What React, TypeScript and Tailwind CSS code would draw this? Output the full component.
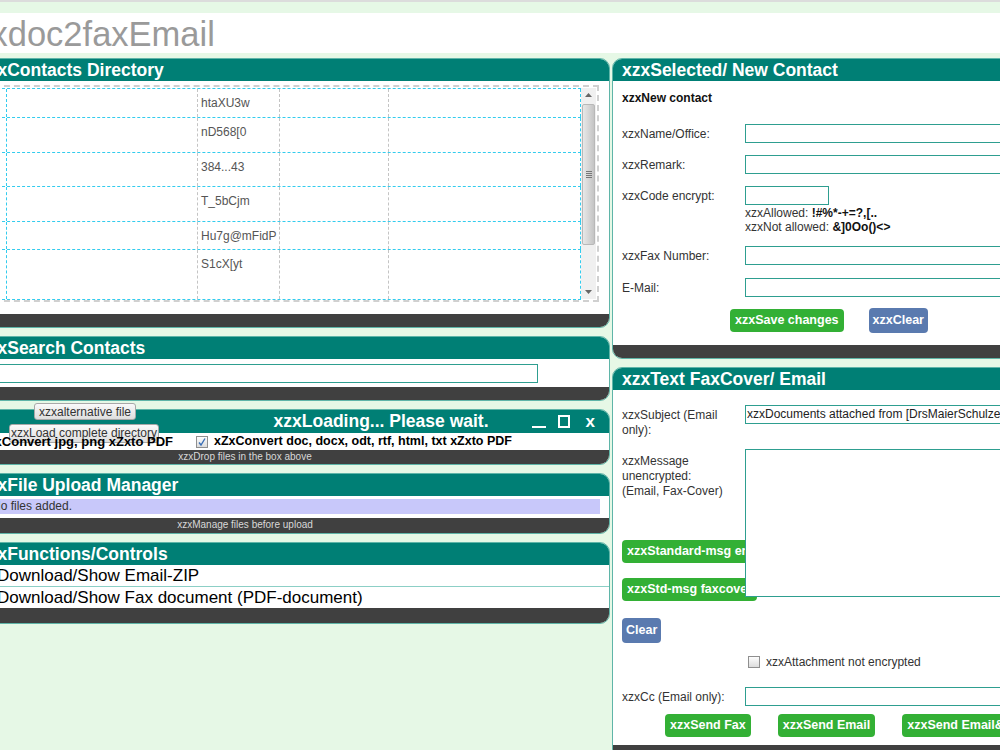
import React from "react";

const contacts = ["htaXU3w", "nD568[0", "384...43", "T_5bCjm", "Hu7g@mFidP", "S1cX[yt"];
const rowHeights = ["h-[29px]", "h-[35px]", "h-[34px]", "h-[35px]", "h-[28px]", "h-[50px]"];

const Header = ({ title, side }: { title: React.ReactNode; side: "left" | "right" }) => (
  <div
    className={`h-[22px] bg-[#007f75] text-white font-bold text-[17.5px] leading-[22px] whitespace-nowrap ${
      side === "left" ? "rounded-tr-[9px] pl-[8px]" : "rounded-tl-[9px] pl-[9px]"
    }`}
  >
    {title}
  </div>
);

const Footer = ({ side, text, h = "h-[14px]" }: { side: "left" | "right"; text?: string; h?: string }) => (
  <div
    className={`${h} bg-[#404040] text-[10px] leading-[14px] text-[#d8d8d8] text-center pr-[90px] ${
      side === "left" ? "rounded-br-[9px]" : "rounded-bl-[9px]"
    }`}
  >
    {text}
  </div>
);

const Checkbox = ({ checked }: { checked?: boolean }) => (
  <span className="inline-flex w-[12px] h-[12px] border border-[#8f8f8f] bg-gradient-to-b from-[#fdfdfd] to-[#dcdcdc] items-center justify-center shrink-0">
    {checked && (
      <svg width="10" height="10" viewBox="0 0 10 10">
        <path d="M2 5.5 L4 8 L8 1.5" fill="none" stroke="#3b6fb6" strokeWidth="1.4" />
      </svg>
    )}
  </span>
);

const GreenBtn = ({ children, className = "" }: { children: React.ReactNode; className?: string }) => (
  <button
    className={`h-[23px] px-[5px] rounded-[4px] bg-[#33b035] text-white font-bold text-[12.5px] leading-[23px] whitespace-nowrap ${className}`}
  >
    {children}
  </button>
);

const BlueBtn = ({ children }: { children: React.ReactNode }) => (
  <button className="h-[25px] px-[4px] rounded-[4px] bg-[#5a7aaf] text-white font-bold text-[12.5px] leading-[25px] whitespace-nowrap">
    {children}
  </button>
);

const Field = ({ w = "w-[300px]", value }: { w?: string; value?: string }) => (
  <div
    className={`${w} h-[19px] border border-[#2e9e90] bg-white text-[12px] leading-[17px] px-[1px] text-[#222] whitespace-nowrap overflow-hidden`}
  >
    {value}
  </div>
);

const Scrollbar = () => (
  <div className="w-[15px] bg-[#f0f0f0] flex flex-col items-center">
    <div className="h-[14px] flex items-center justify-center">
      <svg width="7" height="4" viewBox="0 0 7 4">
        <path d="M0 4 L3.5 0 L7 4 Z" fill="#666" />
      </svg>
    </div>
    <div className="w-[13px] h-[141px] mt-[2px] rounded-[2px] border border-[#b8b8b8] bg-gradient-to-r from-[#e8e8e8] via-[#d6d6d6] to-[#c4c4c4] flex flex-col items-center justify-center gap-[1px]">
      <div className="w-[6px] h-[1px] bg-[#777]" />
      <div className="w-[6px] h-[1px] bg-[#777]" />
      <div className="w-[6px] h-[1px] bg-[#777]" />
      <div className="w-[6px] h-[1px] bg-[#777]" />
    </div>
    <div className="flex-1" />
    <div className="h-[14px] flex items-center justify-center">
      <svg width="7" height="4" viewBox="0 0 7 4">
        <path d="M0 0 L3.5 4 L7 0 Z" fill="#666" />
      </svg>
    </div>
  </div>
);

const ContactsTable = () => (
  <div className="flex-1 border-t border-dashed border-[#33ccee]">
    {contacts.map((c, i) => (
      <div key={c} className={`grid grid-cols-[30px_191px_82px_109px_1fr] ${rowHeights[i]} border-b border-dashed border-[#33ccee]`}>
        <div className="border-r border-dashed border-[#33ccee]" />
        <div className="border-r border-dashed border-[#c4c4c4]" />
        <div className="border-r border-dashed border-[#c4c4c4] text-[12px] text-[#555] pl-[3px] pt-[5px] whitespace-nowrap">
          {c}
        </div>
        <div className="border-r border-dashed border-[#c4c4c4]" />
        <div className="border-r border-dashed border-[#33ccee]" />
      </div>
    ))}
  </div>
);

export default function App() {
  return (
    <div className="w-[1000px] h-[750px] overflow-hidden bg-[#e6f8e6] font-['Liberation_Sans',Arial,sans-serif]">
      <div className="h-[13px] border-t-2 border-[#dcdcdc]" />
      <div className="h-[40px] bg-white overflow-hidden">
        <div className="-ml-[44px] text-[34.5px] leading-[42px] text-[#9a9a9a] whitespace-nowrap">xzxdoc2faxEmail</div>
      </div>

      <div className="flex gap-[2px] mt-[5px] -ml-[30px]">
        {/* left column */}
        <div className="w-[640px] shrink-0 flex flex-col gap-[8px]">
          <div className="border border-[#5fb5a8] rounded-r-[10px]">
            <Header side="left" title="xzxContacts Directory" />
            <div className="bg-white h-[233px] pt-[4px] pl-[3px] pr-[10px]">
              <div className="h-[217px] border-2 border-dashed border-[#d0d0d0] flex p-[1px]">
                <ContactsTable />
                <Scrollbar />
              </div>
            </div>
            <Footer side="left" h="h-[13px]" />
          </div>

          <div className="border border-[#5fb5a8] rounded-r-[10px]">
            <Header side="left" title="xzxSearch Contacts" />
            <div className="bg-white h-[28px] pt-[5px] pl-[3px]">
              <div className="w-[564px] h-[19px] border border-[#2e9e90]" />
            </div>
            <Footer side="left" h="h-[13px]" />
          </div>

          <div className="relative border border-[#5fb5a8] rounded-r-[10px]">
            <div className="h-[23px] bg-[#007f75] rounded-tr-[9px] flex items-center justify-end text-white font-bold whitespace-nowrap pr-[14px]">
              <span className="text-[17.5px] leading-[23px] mr-[43px]">xzxLoading... Please wait.</span>
              <span className="w-[14px] h-[12px] border-b-2 border-white mr-[12px]" />
              <span className="w-[12px] h-[13px] border-2 border-white mr-[16px]" />
              <span className="text-[17px] leading-[23px]">x</span>
            </div>
            <div className="bg-white h-[17px] flex items-center text-[13px] font-bold text-black whitespace-nowrap">
              <div className="w-[225px] flex items-center justify-end gap-[6px] pr-[23px]">
                <Checkbox checked />
                <span className="relative z-20">xzxConvert jpg, png xZxto PDF</span>
              </div>
              <div className="flex items-center gap-[6px] relative z-20">
                <Checkbox checked />
                <span className="text-[12.5px]">xZxConvert doc, docx, odt, rtf, html, txt xZxto PDF</span>
              </div>
            </div>
            <Footer side="left" text="xzxDrop files in the box above" />
            <button className="absolute z-10 left-[63px] -top-[7px] h-[17px] w-[102px] rounded-[3px] border border-[#a8a8a8] bg-gradient-to-b from-[#fafafa] to-[#dedede] text-[12px] leading-[14px] text-[#333] overflow-hidden">
              xzxalternative file
            </button>
            <button className="absolute z-10 left-[38px] top-[14px] h-[19px] w-[150px] rounded-[3px] border border-[#a8a8a8] bg-gradient-to-b from-[#fafafa] to-[#dedede] text-[12px] leading-[17px] text-[#333] whitespace-nowrap">
              xzxLoad complete directory
            </button>
          </div>

          <div className="border border-[#5fb5a8] rounded-r-[10px]">
            <Header side="left" title="xzxFile Upload Manager" />
            <div className="bg-white h-[22px] pt-[3px] pr-[9px]">
              <div className="h-[15px] bg-[#c8c8fa] text-[12px] leading-[15px] text-[#333] pl-[21px]">No files added.</div>
            </div>
            <Footer side="left" h="h-[15px]" text="xzxManage files before upload" />
          </div>

          <div className="border border-[#5fb5a8] rounded-r-[10px]">
            <Header side="left" title="xzxFunctions/Controls" />
            <div className="bg-white text-[17px] text-black">
              <div className="h-[22px] leading-[22px] pl-[26px] border-b border-[#8ccfc6]">Download/Show Email-ZIP</div>
              <div className="h-[21px] leading-[21px] pl-[26px]">Download/Show Fax document (PDF-document)</div>
            </div>
            <Footer side="left" h="h-[15px]" />
          </div>
        </div>

        {/* right column */}
        <div className="w-[430px] shrink-0 flex flex-col gap-[8px]">
          <div className="border border-[#5fb5a8] rounded-l-[10px]">
            <Header side="right" title="xzxSelected/ New Contact" />
            <div className="bg-white h-[264px] pl-[9px] text-[12px] text-[#333]">
              <div className="pt-[9px] font-bold text-[#111] leading-[16px]">xzxNew contact</div>
              <div className="grid grid-cols-[123px_1fr] items-center mt-[18px]">
                <span>xzxName/Office:</span>
                <Field />
              </div>
              <div className="grid grid-cols-[123px_1fr] items-center mt-[12px]">
                <span>xzxRemark:</span>
                <Field />
              </div>
              <div className="grid grid-cols-[123px_1fr] mt-[12px]">
                <span className="pt-[1px]">xzxCode encrypt:</span>
                <div>
                  <Field w="w-[84px]" />
                  <div className="leading-[14px] mt-[1px]">
                    xzxAllowed: <b className="text-[#111]">!#%*-+=?,[..</b>
                  </div>
                  <div className="leading-[14px]">
                    xzxNot allowed: <b className="text-[#111]">&amp;]0Oo()&lt;&gt;</b>
                  </div>
                </div>
              </div>
              <div className="grid grid-cols-[123px_1fr] items-center mt-[12px]">
                <span>xzxFax Number:</span>
                <Field />
              </div>
              <div className="grid grid-cols-[123px_1fr] items-center mt-[13px]">
                <span>E-Mail:</span>
                <Field />
              </div>
              <div className="flex items-center gap-[25px] mt-[11px] pl-[108px]">
                <GreenBtn>xzxSave changes</GreenBtn>
                <BlueBtn>xzxClear</BlueBtn>
              </div>
            </div>
            <Footer side="right" h="h-[13px]" />
          </div>

          <div className="border border-[#5fb5a8] rounded-l-[10px]">
            <Header side="right" title="xzxText FaxCover/ Email" />
            <div className="bg-white h-[355px] pl-[9px] text-[12px] text-[#333]">
              <div className="grid grid-cols-[123px_1fr] pt-[15px]">
                <span className="leading-[15px] pt-[3px] pr-[10px]">xzxSubject (Email only):</span>
                <Field value="xzxDocuments attached from [DrsMaierSchulze]" />
              </div>
              <div className="flex mt-[11px]">
                <div className="w-[123px] shrink-0">
                  <div className="leading-[15px] pt-[5px]">
                    <div>xzxMessage</div>
                    <div>unencrypted:</div>
                    <div>(Email, Fax-Cover)</div>
                  </div>
                  <GreenBtn className="mt-[41px]">xzxStandard-msg email</GreenBtn>
                  <GreenBtn className="mt-[15px]">xzxStd-msg faxcover</GreenBtn>
                </div>
                <div className="relative z-10 w-[300px] h-[148px] border border-[#2e9e90] bg-white" />
              </div>
              <div className="mt-[17px]">
                <BlueBtn>Clear</BlueBtn>
              </div>
              <div className="flex items-center gap-[6px] mt-[12px] pl-[126px] h-[14px]">
                <Checkbox />
                <span>xzxAttachment not encrypted</span>
              </div>
              <div className="grid grid-cols-[123px_1fr] items-center mt-[18px]">
                <span>xzxCc (Email only):</span>
                <Field />
              </div>
              <div className="flex items-center gap-[27px] mt-[8px] pl-[43px]">
                <GreenBtn>xzxSend Fax</GreenBtn>
                <GreenBtn>xzxSend Email</GreenBtn>
                <GreenBtn>xzxSend Email&amp;Fax</GreenBtn>
              </div>
            </div>
            <Footer side="right" h="h-[13px]" />
          </div>
        </div>
      </div>
    </div>
  );
}
